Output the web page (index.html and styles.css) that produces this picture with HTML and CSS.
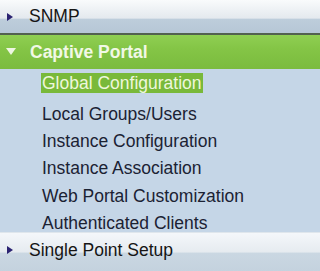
FILE: index.html
```html
<!DOCTYPE html>
<html>
<head>
<meta charset="utf-8">
<link rel="stylesheet" href="styles.css">
</head>
<body>
<nav class="menu">
  <div class="head head-closed">
    <svg class="arrow" width="6" height="8" viewBox="0 0 6 8"><polygon points="0,0 6,4 0,8" fill="#2b2372"/></svg>
    <span class="label">SNMP</span>
  </div>
  <div class="head head-open">
    <svg class="arrow-down" width="10" height="8" viewBox="0 0 10 8"><polygon points="0,0 10,0 5,7" fill="#eef6e2"/></svg>
    <span class="label bold">Captive Portal</span>
  </div>
  <ul class="sub">
    <li class="item item-active"><span class="hl">Global Configuration</span></li>
    <li class="item">Local Groups/Users</li>
    <li class="item">Instance Configuration</li>
    <li class="item">Instance Association</li>
    <li class="item">Web Portal Customization</li>
    <li class="item item-last">Authenticated Clients</li>
  </ul>
  <div class="head head-closed head-bottom">
    <svg class="arrow" width="6" height="8" viewBox="0 0 6 8"><polygon points="0,0 6,4 0,8" fill="#2b2372"/></svg>
    <span class="label">Single Point Setup</span>
  </div>
</nav>
</body>
</html>
```
FILE: styles.css
```css
html {
  background: #c4d2de;
}
html, body {
  margin: 0;
  padding: 0;
}
body {
  font-family: "Liberation Sans", Arial, sans-serif;
  font-size: 17.5px;
  min-height: 271px;
  overflow: hidden;
}
.menu {
  background: #c5d6e7;
}
.head {
  display: flex;
  align-items: center;
  padding-left: 7px;
  box-sizing: border-box;
}
.arrow {
  margin-right: 16px;
  flex: none;
}
.arrow-down {
  margin-left: -1px;
  margin-right: 14px;
  flex: none;
}
.head-closed {
  height: 35px;
  color: #151515;
  background: linear-gradient(to bottom, #f9fbfc 0, #e4e9ee 55%, #bdcddb 58%, #b6c7d6 100%);
  border-bottom: 2px solid #52614f;
}
.head-open {
  height: 34px;
  color: #f1f8e6;
  background: linear-gradient(to bottom, #8fcf52 0, #84c546 40%, #7bbb3e 100%);
}
.bold {
  font-weight: bold;
}
.sub {
  list-style: none;
  margin: 0;
  padding: 0;
}
.item {
  height: 27.2px;
  line-height: 27.2px;
  padding-left: 42px;
  color: #1b2233;
  white-space: nowrap;
}
.item-active {
  height: 32px;
  line-height: 28px;
  padding-left: 41px;
}
.hl {
  background: #79b93a;
  color: #eef7dc;
  padding: 0 1px;
}
.item-last {
  height: 22.2px;
}
.head-bottom {
  height: 39px;
  padding-bottom: 3px;
  border-bottom: none;
  border-top: 1px solid #dfe6ec;
  background: linear-gradient(to bottom, #f4f7fa 0, #e6ebf0 50%, #cad7e2 53%, #c4d2de 100%);
}
```
